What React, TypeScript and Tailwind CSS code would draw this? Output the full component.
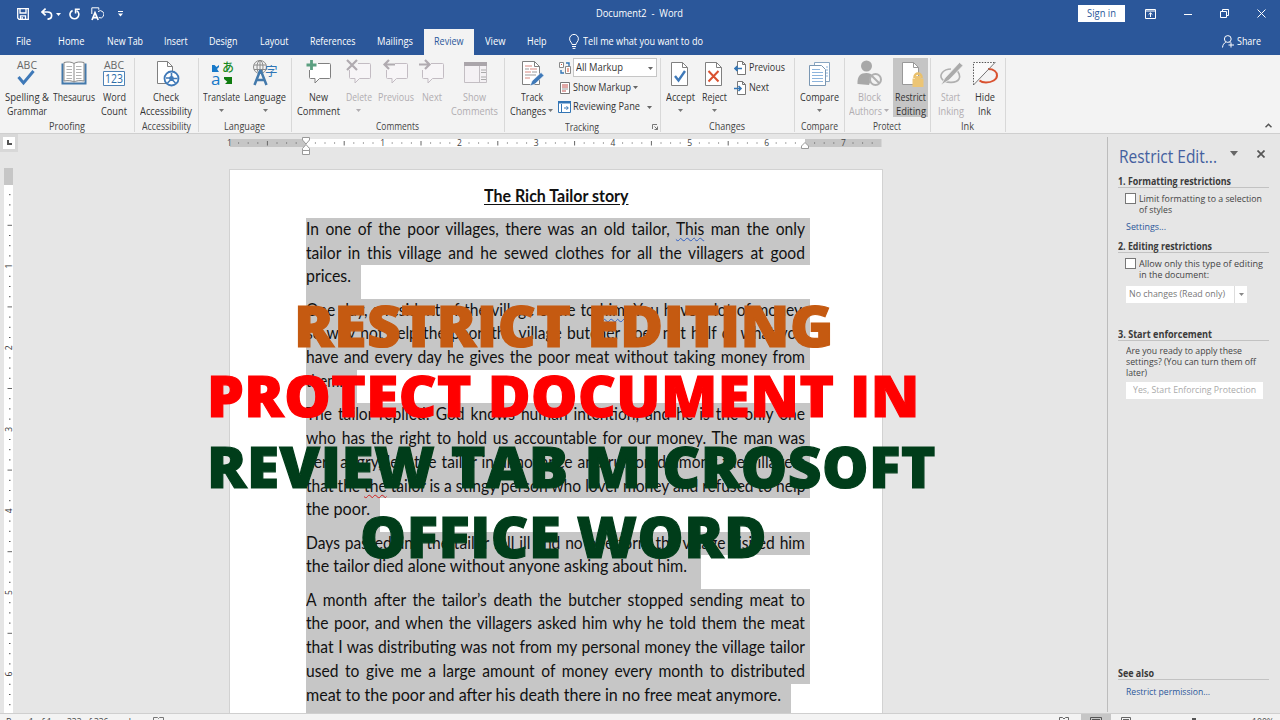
import React, { ReactNode, useLayoutEffect, useRef, useState } from "react";
import clsx from "clsx";

// Squeezes one line of text to a given width.
function Fit({
  w,
  className,
  children,
}: {
  w: number;
  className?: string;
  children: ReactNode;
}) {
  const ref = useRef<HTMLSpanElement>(null);
  const [scale, setScale] = useState(1);

  useLayoutEffect(() => {
    if (!ref.current) return;
    const natural = parseFloat(getComputedStyle(ref.current).width);
    if (natural > 0) setScale(w / natural);
  }, [w]);

  return (
    <span
      className={clsx("flex shrink-0 whitespace-nowrap", className)}
      style={{ width: w }}
    >
      <span
        ref={ref}
        className="block shrink-0 origin-left"
        style={{ transform: `scaleX(${scale})` }}
      >
        {children}
      </span>
    </span>
  );
}

function Caret({ className }: { className?: string }) {
  return (
    <svg
      viewBox="0 0 5 3"
      className={clsx("h-[3px] w-[5px] shrink-0 fill-current", className)}
    >
      <path d="M0 0h5L2.5 3z" />
    </svg>
  );
}

/* ---------- title bar ---------- */

function TitleBar() {
  return (
    <div className="flex h-[27px] items-center text-white">
      <div className="flex w-[596px] items-center pt-px pl-[17px]">
        <svg className="h-3 w-3" viewBox="0 0 12 12" fill="none" stroke="currentColor" strokeWidth="1.3">
          <path d="M.7.7h10.6v10.6H2L.7 10z" />
          <path d="M3 1v4h6V1M3.5 11V7.8h5V11M5.2 9v2" />
        </svg>
        <svg className="ml-3 h-3 w-3" viewBox="0 0 12 12" fill="none" stroke="currentColor" strokeWidth="1.7">
          <path d="M4.6.6 1 4l3.6 3.4M1.2 4h5.3c5.5 0 5.5 7 0 7.2" />
        </svg>
        <Caret className="ml-[3px]" />
        <svg className="ml-2 h-3 w-[11px]" viewBox="0 0 11 12" fill="none" stroke="currentColor" strokeWidth="1.6">
          <path d="M3.6 2.4a4.4 4.4 0 1 0 4 .2" />
          <path d="M10.8 1.2H6.6v4.2" />
        </svg>
        <svg className="ml-[11px] h-[14px] w-[13px]" viewBox="0 0 13 14" fill="none" stroke="currentColor">
          <path d="M.8 7V.8h7v2M7 4.6a3.6 3.6 0 1 1 .8 6" />
          <path d="M1 13 4 5.6 7.2 13M2.2 10.6H6" strokeWidth="1.7" />
        </svg>
        <svg className="ml-[14px] h-[6px] w-[5px]" viewBox="0 0 5 6" fill="currentColor">
          <path d="M0 0h5v1H0zM0 2.6h5L2.5 5.6z" />
        </svg>
      </div>
      <Fit w={87} className="text-[10.5px]">
        Document2&nbsp; -&nbsp; Word
      </Fit>
      <div className="ml-auto flex items-center">
        <div className="flex h-[17px] w-[47px] items-center justify-center bg-white text-[10.5px] text-[#2b579a]">
          <Fit w={29}>Sign in</Fit>
        </div>
        <svg className="ml-5 h-[10px] w-[11px]" viewBox="0 0 11 10" fill="none" stroke="currentColor">
          <path d="M.5.5h10v9H.5zM.5 2h10M5.5 8V4M3.6 5.6l1.9-1.8 1.9 1.8" />
        </svg>
        <svg className="ml-[28px] h-2 w-2" viewBox="0 0 8 8" stroke="currentColor">
          <path d="M0 4.500h8" />
        </svg>
        <svg className="ml-[28px] h-[9px] w-[9px]" viewBox="0 0 9 9" fill="none" stroke="currentColor">
          <path d="M.5 2.5h6v6h-6zM2.5 2.5v-2h6v6h-2" />
        </svg>
        <svg className="mr-[14px] ml-7 h-[9px] w-[9px]" viewBox="0 0 9 9" stroke="currentColor">
          <path d="m.5.5 8 8M8.5.5l-8 8" />
        </svg>
      </div>
    </div>
  );
}

/* ---------- tabs ---------- */

const TABS: { label: string; w: number }[] = [
  { label: "Home", w: 26.5 },
  { label: "New Tab", w: 36 },
  { label: "Insert", w: 23.5 },
  { label: "Design", w: 28.5 },
  { label: "Layout", w: 28.5 },
  { label: "References", w: 45.5 },
  { label: "Mailings", w: 36 },
  { label: "Review", w: 29.5 },
  { label: "View", w: 20.5 },
  { label: "Help", w: 19.5 },
];

function TabRow() {
  return (
    <div className="flex h-[27.500px] pl-4 text-[10.5px] text-white">
      <Fit w={15} className="mr-[16.500px] items-center pt-[2px]">
        File
      </Fit>
      {TABS.map((tab) => (
        <div
          key={tab.label}
          className={clsx(
            "flex items-center",
            tab.label === "Review"
              ? "mt-[2px] bg-[#f3f3f3] px-[10px] text-[#2b579a] ml-[0.500px] mr-[0.500px]"
              : "px-[10.850px] pt-[2px]",
          )}
        >
          <Fit w={tab.w}>{tab.label}</Fit>
        </div>
      ))}
      <svg className="mt-[7px] ml-[11px] h-[15px] w-[10px]" viewBox="0 0 10 15" fill="none" stroke="currentColor">
        <path d="M3 10.5c0-2-2.4-2.8-2.4-5.7a4.4 4.4 0 0 1 8.8 0c0 2.9-2.4 3.700-2.400 5.700zM3 12.500h4M3.600 14.400h2.800" />
      </svg>
      <Fit w={120} className="ml-[4.500px] items-center pt-[2px]">
        Tell me what you want to do
      </Fit>
      <div className="mr-[19px] ml-auto flex items-center pt-[2px]">
        <svg className="mr-[3px] h-[13px] w-[12px]" viewBox="0 0 12 13" fill="none" stroke="currentColor">
          <circle cx="5.800" cy="4" r="3.400" />
          <path d="M.5 12.500c.3-2.800 1.500-4.300 3.300-5.300M7.500 7l.8.800M9 7.500v5M6.500 10H12" />
        </svg>
        <Fit w={24}>Share</Fit>
      </div>
    </div>
  );
}

/* ---------- ribbon icons ---------- */

function BigIcon({ children }: { children: ReactNode }) {
  return (
    <svg className="h-7 w-7 shrink-0 overflow-visible" viewBox="0 0 28 28" fill="none">
      {children}
    </svg>
  );
}

const SpellingIcon = (
  <BigIcon>
    <text x="4" y="11" textLength="20" lengthAdjust="spacingAndGlyphs" fontSize="11" fill="#666">
      ABC
    </text>
    <path d="m5.500 19 5 6L20.500 13" stroke="#3f79b8" strokeWidth="3" />
  </BigIcon>
);

const ThesaurusIcon = (
  <BigIcon>
    <path d="M2.500 5.500v20h23v-20" stroke="#4379ab" strokeWidth="2" />
    <path d="M4 4.500c4-1 8-.5 10 1 2-1.500 6-2 10-1V23c-4-.8-8-.3-10 1-2-1.300-6-1.800-10-1z" fill="#fff" stroke="#888" />
    <path d="M14 5.500V24" stroke="#888" />
    <path d="M6.500 8.500H12M6.500 11.500H12M6.500 14.500H12M6.500 17.500H12M6.500 20.500H12M16 8.500h5.500M16 11.500h5.500M16 14.500h5.500M16 17.500h5.500M16 20.500h5.500" stroke="#aaa" strokeWidth=".9" />
  </BigIcon>
);

const WordCountIcon = (
  <BigIcon>
    <text x="4" y="11" textLength="20" lengthAdjust="spacingAndGlyphs" fontSize="11" fill="#666">
      ABC
    </text>
    <path d="M3.500 13.500h21v14h-21z" fill="#fff" stroke="#4f82b5" />
    <text x="5" y="25" textLength="18" lengthAdjust="spacingAndGlyphs" fontSize="12" fill="#2e6da8">
      123
    </text>
  </BigIcon>
);

const AccessibilityIcon = (
  <BigIcon>
    <path d="M5.500 3.500h10l5 5v17h-15z" fill="#fff" stroke="#808080" />
    <path d="M15.500 3.500v5h5" stroke="#808080" />
    <circle cx="19.500" cy="20.500" r="7" fill="#fff" stroke="#3f79b8" strokeWidth="1.800" />
    <path d="M19.500 15v5.500h6M19.500 21l-4 4M19.500 21l4 4M14 20h5" stroke="#3f79b8" strokeWidth="1.600" />
    <circle cx="19.500" cy="20.500" r="2.400" fill="#3f79b8" />
  </BigIcon>
);

const TranslateIcon = (
  <BigIcon>
    <text x="14" y="14" fontSize="12" fontWeight="500" fill="#178a1d" fontFamily="Noto Sans CJK JP, sans-serif">
      あ
    </text>
    <text x="3" y="27" fontSize="17" fill="#1879c9">
      a
    </text>
    <path d="M4 14V7h2.500l2 2L11 7v2l-2 2 2 3z" fill="#1879c9" />
    <path d="M24 19v7h-7l2.300-2.300L16 21v-2z" fill="#107c10" />
  </BigIcon>
);

const LanguageIcon = (
  <BigIcon>
    <g stroke="#8a8a8a">
      <circle cx="9" cy="9" r="6.500" />
      <ellipse cx="9" cy="9" rx="3" ry="6.500" />
      <path d="M3 7h12M3 11.500h12M9 2.500V14" />
    </g>
    <text x="14" y="18" fontSize="12.500" fill="#2e75b6" fontFamily="Noto Sans CJK JP, sans-serif">
      字
    </text>
    <path d="m3.500 27 5.500-14h1l5.500 14M6 22h7.500" stroke="#4379ab" strokeWidth="2.500" />
  </BigIcon>
);

function CommentIcon({ kind }: { kind: "new" | "delete" | "prev" | "next" }) {
  const off = kind !== "new";
  return (
    <BigIcon>
      <path
        d="M13 5.500h11.500q1 0 1 1v13q0 1-1 1H14.500l-4.500 4.500v-4.500H5.500q-1 0-1-1V12"
        fill={off ? "#f7f5f7" : "#fff"}
        stroke={off ? "#c3bcc3" : "#808080"}
      />
      {kind === "new" && <path d="M6.500 2v10M1.500 7h10" stroke="#5b9f80" strokeWidth="2.800" />}
      {kind === "delete" && <path d="m2 2 10 10M12 2 2 12" stroke="#b0abb0" strokeWidth="2.200" />}
      {kind === "prev" && <path d="M7 2 2.500 6.500 7 11M3 6.500h10" stroke="#b0abb0" strokeWidth="2.200" />}
      {kind === "next" && <path d="m7 2 4.500 4.500L7 11M11 6.500H1" stroke="#b0abb0" strokeWidth="2.200" />}
    </BigIcon>
  );
}

const ShowCommentsIcon = (
  <BigIcon>
    <path d="M3.500 4.500h22v20h-22z" fill="#f4f1f4" stroke="#c3bec3" />
    <path d="M3 4h23v4H3z" fill="#aaa5aa" />
    <path d="M18.500 8v16" stroke="#c3bec3" />
    <path d="M20 12h5M20 14.500h5M20 19h5M20 21.500h5" stroke="#aaa" />
  </BigIcon>
);

const TrackIcon = (
  <BigIcon>
    <path d="M4.500 3.500h12l5 5v18h-17z" fill="#fff" stroke="#808080" />
    <path d="M16.500 3.500v5h5" stroke="#808080" />
    <path d="M7 8h7M7 14h6M12 11h7M7 20h5" stroke="#d98880" />
    <path d="M7 11h4M14 14h5M7 17h11" stroke="#999" />
    <path d="m12 28 2-5L23 14.500l3 3L17 26z" fill="#3f79b8" stroke="#fff" strokeWidth=".6" />
  </BigIcon>
);

function PageIcon({ mark }: { mark: "check" | "cross" }) {
  return (
    <BigIcon>
      <path d="M5.500 4.500h11l5 5v18h-16z" fill="#fff" stroke="#808080" />
      <path d="M16.500 4.500v5h5" stroke="#808080" />
      {mark === "check" ? (
        <path d="m9 18 3.500 4.500L19 13" stroke="#3f79b8" strokeWidth="2.400" />
      ) : (
        <path d="m8.500 13 10 10.500M18.500 13l-10 10.500" stroke="#d9512f" strokeWidth="2" />
      )}
    </BigIcon>
  );
}

const CompareIcon = (
  <BigIcon>
    <path d="M9.500 4.500h15v19h-15z" fill="#fff" stroke="#8aa6c1" />
    <path d="M21 9h2M21 12h2M21 15h2M21 18h2" stroke="#8db4dc" />
    <path d="M4.500 7.500h12l4 4v16h-16z" fill="#fff" stroke="#7a97b3" />
    <path d="M7 11.500h8M7 14.500h11M7 17.500h11M7 20.500h11M7 23.500h11" stroke="#8db4dc" strokeWidth="1.200" />
  </BigIcon>
);

const BlockIcon = (
  <BigIcon>
    <circle cx="11.500" cy="8" r="5.500" fill="#a8a8a8" />
    <path d="M2.500 26c-.5-8 3-11 9-11 3 0 5 1 6 2.500L14 27z" fill="#a8a8a8" />
    <circle cx="20.500" cy="21.500" r="5.500" fill="#f3f3f3" stroke="#b0b0b0" strokeWidth="2" />
    <path d="m16.700 17.700 7.600 7.600" stroke="#b0b0b0" strokeWidth="2" />
  </BigIcon>
);

const RestrictIcon = (
  <BigIcon>
    <path d="M5.500 4.500h11l5 5v17h-16z" fill="#fff" stroke="#999" />
    <path d="M16.500 4.500v5h5" stroke="#999" />
    <path d="M17.500 20v-1a3.500 3.500 0 0 1 7 0v1" stroke="#e9c06c" strokeWidth="2.500" />
    <path d="M15.500 20.500h11V29h-11z" fill="#ecc575" />
    <path d="M18 18h6v3h-6z" fill="#ecc575" />
  </BigIcon>
);

const StartInkIcon = (
  <BigIcon>
    <path d="M14 11C6 11 2 17 5 21s14 5 17 0c1.500-3 0-7-3-9" stroke="#b0b0b0" strokeWidth="1.600" />
    <path d="m4 27 4-7L22.500 4.500l3.500 3L12 22z" fill="#aaa" stroke="#f3f3f3" strokeWidth=".7" />
  </BigIcon>
);

const HideInkIcon = (
  <BigIcon>
    <path d="M2 4h22L2 26z" fill="#fafafa" />
    <path d="M2.500 27V4.500h21" stroke="#555" strokeDasharray="1.500 1.300" />
    <path d="M17 11c6 0 9 3 9 6.500 0 4-5 7-11 7-3 0-5-.7-6.500-2" stroke="#d9512f" strokeWidth="2" />
    <path d="M2.500 27 24.500 4" stroke="#777" />
  </BigIcon>
);

/* ---------- ribbon ---------- */

function RibbonButton({
  width,
  icon,
  line1,
  w1,
  line2,
  w2,
  caret,
  disabled,
  active,
}: {
  width: string;
  icon: ReactNode;
  line1: string;
  w1: number;
  line2?: string;
  w2?: number;
  caret?: boolean;
  disabled?: boolean;
  active?: boolean;
}) {
  return (
    <div
      className={clsx(
        "flex h-[59px] shrink-0 flex-col items-center",
        width,
        disabled ? "text-[#b1adb1]" : "text-[#333]",
        active && "bg-[#c5c5c5]",
      )}
    >
      {icon}
      <Fit w={w1} className="mt-1 h-[14px] leading-[14px]">
        {line1}
      </Fit>
      <div className="flex h-[14px] items-center leading-[14px]">
        {line2 && <Fit w={w2 ?? 30}>{line2}</Fit>}
        {caret && <Caret className={clsx(!disabled && "text-[#777]", line2 && "ml-[2px]")} />}
      </div>
    </div>
  );
}

function Group({
  width,
  label,
  w,
  children,
}: {
  width: string;
  label: string;
  w: number;
  children: ReactNode;
}) {
  return (
    <div className={clsx("flex h-[74px] shrink-0 flex-col border-r border-[#d8d8d8]", width)}>
      <div className="flex h-[63px]">{children}</div>
      <div className="flex h-3 justify-center pr-px leading-3 text-[#444]">
        <Fit w={w}>{label}</Fit>
      </div>
    </div>
  );
}

function SmallPage({ dir }: { dir: "left" | "right" }) {
  return (
    <svg className="h-[14px] w-3" viewBox="0 0 12 14" fill="none">
      <path d="M3.500.5h5l3 3v10h-8zM8.500.5v3h3" fill="#fff" stroke="#777" />
      <path
        d={dir === "left" ? "M8 7.500H1M3.500 5 1 7.500 3.500 10" : "M0 7.500h7M4.500 5 7 7.500 4.500 10"}
        stroke="#3375b5"
        strokeWidth="1.600"
      />
    </svg>
  );
}

function Ribbon() {
  return (
    <div className="flex h-[79px] shrink-0 border-b border-[#cfcfcf] bg-[#f3f3f3] pt-[3px] text-[10.2px] text-[#333]">
      <Group width="w-[135px]" label="Proofing" w={36}>
        <div className="w-1" />
        <RibbonButton width="w-[45px]" icon={SpellingIcon} line1="Spelling &" w1={44} line2="Grammar" w2={40} />
        <RibbonButton width="w-[50px]" icon={ThesaurusIcon} line1="Thesaurus" w1={42} />
        <RibbonButton width="w-[30px]" icon={WordCountIcon} line1="Word" w1={23} line2="Count" w2={26} />
      </Group>
      <Group width="w-[64px]" label="Accessibility" w={49}>
        <RibbonButton width="w-[62px]" icon={AccessibilityIcon} line1="Check" w1={26} line2="Accessibility" w2={52} />
      </Group>
      <Group width="w-[93px]" label="Language" w={41}>
        <RibbonButton width="w-[45px]" icon={TranslateIcon} line1="Translate" w1={37} caret />
        <RibbonButton width="w-[42px]" icon={LanguageIcon} line1="Language" w1={42} caret />
      </Group>
      <Group width="w-[213px]" label="Comments" w={43}>
        <RibbonButton width="w-[53px]" icon={<CommentIcon kind="new" />} line1="New" w1={19} line2="Comment" w2={43} />
        <RibbonButton width="w-[27px]" icon={<CommentIcon kind="delete" />} line1="Delete" w1={26} caret disabled />
        <RibbonButton width="w-[47px]" icon={<CommentIcon kind="prev" />} line1="Previous" w1={36} disabled />
        <RibbonButton width="w-[26px]" icon={<CommentIcon kind="next" />} line1="Next" w1={20} disabled />
        <RibbonButton width="w-[59px]" icon={ShowCommentsIcon} line1="Show" w1={23} line2="Comments" w2={47} disabled />
      </Group>
      <Group width="w-[156px]" label="Tracking" w={34}>
        <RibbonButton width="w-[53px]" icon={TrackIcon} line1="Track" w1={22} line2="Changes" w2={36} caret />
        <div className="flex w-[99px] flex-col">
          <div className="flex h-[20px] items-center">
            <svg className="h-[14px] w-[14px]" viewBox="0 0 14 14" fill="none">
              <path d="M1.500 1.500h4v5h-4zM7.500 5.500h5v7h-5z" fill="#fff" stroke="#888" />
              <path d="M8 2h3v3M6 12H3V9" stroke="#3375b5" strokeWidth="1.400" />
              <path d="M9 8h2M9 10h2M3 3.500h1" stroke="#d9512f" />
            </svg>
            <div className="ml-px flex h-[19px] w-[84px] items-center justify-between border border-[#c6c6c6] bg-white pt-px pr-[3px] pl-[2px]">
              <Fit w={47}>All Markup</Fit>
              <Caret className="text-[#666]" />
            </div>
          </div>
          <div className="flex h-[20px] items-center">
            <svg className="ml-[2px] h-3 w-[10px]" viewBox="0 0 10 12" fill="none">
              <path d="M.5.500h9v11h-9z" fill="#fff" stroke="#777" />
              <path d="M2 3h6M2 5h6M2 9h4" stroke="#c0504d" />
              <path d="M2 7h6" stroke="#999" />
            </svg>
            <Fit w={58} className="ml-[3px]">
              Show Markup
            </Fit>
            <Caret className="ml-[2px] text-[#666]" />
          </div>
          <div className="flex h-[19px] items-center">
            <svg className="h-[12px] w-[13px]" viewBox="0 0 13 12" fill="none">
              <path d="M.5.500h12v11H.5z" fill="#fff" stroke="#3375b5" />
              <path d="M0 0h13v2.500H0z" fill="#3375b5" />
              <path d="M3.500 3v9" stroke="#3375b5" />
              <path d="M6 7h4M8.500 5.200 10.300 7 8.500 8.800" stroke="#3375b5" />
            </svg>
            <Fit w={67} className="ml-[2px]">
              Reviewing Pane
            </Fit>
            <Caret className="ml-[7px] text-[#666]" />
          </div>
        </div>
        <svg className="mt-[66px] -ml-[5px] h-[6px] w-[6px] shrink-0" viewBox="0 0 6 6" fill="none" stroke="#777">
          <path d="M.5 5V.5H5M2.500 2.500l3 3M5.500 2.500v3h-3" />
        </svg>
      </Group>
      <Group width="w-[134px]" label="Changes" w={36}>
        <RibbonButton width="w-[38px]" icon={<PageIcon mark="check" />} line1="Accept" w1={29} caret />
        <RibbonButton width="w-[30px]" icon={<PageIcon mark="cross" />} line1="Reject" w1={25} caret />
        <div className="ml-[5px] flex flex-col">
          <div className="flex h-5 items-center gap-[3px]">
            <SmallPage dir="left" />
            <Fit w={36}>Previous</Fit>
          </div>
          <div className="flex h-[20px] items-center gap-[3px]">
            <SmallPage dir="right" />
            <Fit w={20}>Next</Fit>
          </div>
        </div>
      </Group>
      <Group width="w-[50px]" label="Compare" w={37}>
        <RibbonButton width="w-[48px]" icon={CompareIcon} line1="Compare" w1={39} caret />
      </Group>
      <Group width="w-[86px]" label="Protect" w={28}>
        <RibbonButton width="w-[48px]" icon={BlockIcon} line1="Block" w1={23} line2="Authors" w2={33} caret disabled />
        <RibbonButton width="w-[35px]" icon={RestrictIcon} line1="Restrict" w1={31} line2="Editing" w2={30} active />
      </Group>
      <Group width="w-[75px]" label="Ink" w={13}>
        <RibbonButton width="w-[39px]" icon={StartInkIcon} line1="Start" w1={19} line2="Inking" w2={26} disabled />
        <RibbonButton width="w-[29px]" icon={HideInkIcon} line1="Hide" w1={20} line2="Ink" w2={13} />
      </Group>
      <svg className="mt-auto mr-[8px] mb-[5px] ml-auto h-[5px] w-[7px]" viewBox="0 0 7 5" fill="none" stroke="#555" strokeWidth="1.500">
        <path d="M.5 4.300 3.500 1.300l3 3" />
      </svg>
    </div>
  );
}

/* ---------- rulers ---------- */

const range = (from: number, to: number) =>
  Array.from({ length: to - from + 1 }, (_, i) => from + i);

function HorizontalRuler() {
  return (
    <svg className="mt-[4px] h-5 w-[660px] overflow-visible" viewBox="0 0 660 20">
      <path d="M2 1h651.500v8H2z" fill="#c6c6c6" />
      <path d="M78 1h499v8H78z" fill="#fff" />
      {range(-8, 59).map((i) => {
        const x = 77.800 + i * 9.600;
        if (i === 0 || i === 52) return null;
        if (i % 8 === 0)
          return (
            <text key={i} x={i < 0 ? 1.500 : x} y={8} textAnchor="middle" fontSize="8.500" fill="#444">
              {Math.abs(i / 8)}
            </text>
          );
        return i % 4 === 0 ? (
          <path key={i} d={`M${x} 3v4.500`} stroke="#666" />
        ) : (
          <path key={i} d={`M${x - 0.500} 5h1`} stroke="#555" />
        );
      })}
      <g fill="#fff" stroke="#999">
        <path d="M74.500-.5h7v2.500L78 6l-3.500-4zM74.500 12.500v-2L78 6.500l3.500 4v2zM74.500 12.500h7v4h-7z" />
        <path d="M573.500 10.500v-2.500l3.500-3.500 3.500 3.500v2.500z" />
      </g>
    </svg>
  );
}

function VerticalRuler() {
  return (
    <svg className="mt-[16.500px] ml-1 h-[545px] w-[9px]" viewBox="0 0 9 545">
      <path d="M0 0h9v17H0z" fill="#c6c6c6" />
      <path d="M0 17h9v528H0z" fill="#fff" />
      {range(1, 51).map((i) => {
        const y = 16.500 + i * 10.200;
        if (i % 8 === 0)
          return (
            <text key={i} textAnchor="middle" fontSize="8.500" fill="#333" transform={`translate(8 ${y}) rotate(-90)`}>
              {i / 8}
            </text>
          );
        return i % 4 === 0 ? (
          <path key={i} d={`M3.500 ${y}h4.500`} stroke="#666" />
        ) : (
          <path key={i} d={`M5 ${y}h1.500`} stroke="#555" />
        );
      })}
    </svg>
  );
}

/* ---------- document ---------- */

type Paragraph = { lines: ReactNode[]; last: string; w: number; pad?: string };

const blueWave =
  "underline decoration-[#2f5fc4] decoration-wavy decoration-[0.800px] underline-offset-[2px]";
const redWave =
  "underline decoration-[#d02020] decoration-wavy decoration-[0.800px] underline-offset-[2px]";

const STORY: Paragraph[] = [
  {
    lines: [
      <>
        In one of the poor villages, there was an old tailor,{" "}
        <span className={blueWave}>This</span> man the only
      </>,
      "tailor in this village and he sewed clothes for all the villagers at good",
    ],
    last: "prices.",
    w: 45,
  },
  {
    lines: [
      <>
        One day, a resident of the village came to{" "}
        <span className={blueWave}>him:</span> You have a lot of money,
      </>,
      "so why not help the poor, the village butcher does not half of what you",
      "have and every day he gives the poor meat without taking money from",
    ],
    last: "them.",
    w: 37,
    pad: "pr-[14px]",
  },
  {
    lines: [
      "The tailor replied: God knows human intention, and he is the only one",
      "who has the right to hold us accountable for our money. The man was",
      "very angry, left the tailor in annoyance and rumored among the villagers",
      <>
        that the <span className={redWave}>the</span> tailor is a stingy person
        who lover money and refused to help
      </>,
    ],
    last: "the poor.",
    w: 64,
  },
  {
    lines: [
      "Days passed and the tailor fell ill and no one form the village visited him",
    ],
    last: "the tailor died alone without anyone asking about him.",
    w: 381,
    pad: "pr-[14px]",
  },
  {
    lines: [
      "A month after the tailor’s death the butcher stopped sending meat to",
      "the poor, and when the villagers asked him why he told them the meat",
      "that I was distributing was not from my personal money the village tailor",
      "used to give me a large amount of money every month to distributed",
    ],
    last: "meat to the poor and after his death there in no free meat anymore.",
    w: 475,
  },
];

function Story() {
  return (
    <div className="text-[16.800px] leading-[21px] text-[#111]">
      {STORY.map((p) => (
        <div key={p.last}>
          {p.lines.map((line, i) => (
            <div key={i} className="h-[23.800px] w-[503.500px] bg-[#c6c6c6]">
              <div className="w-[536.500px] origin-left scale-x-[0.930] whitespace-nowrap [text-align-last:justify]">
                {line}
              </div>
            </div>
          ))}
          <div className="flex h-[33.200px]">
            <div className={clsx("bg-[#c6c6c6]", p.pad ?? "pr-[10px]")}>
              <Fit w={p.w}>{p.last}</Fit>
            </div>
          </div>
        </div>
      ))}
    </div>
  );
}

function Page() {
  return (
    <div className="ml-[1px] h-[546px] w-[654px] overflow-hidden border border-b-0 border-[#d2d2d2] bg-white pl-[76px] font-['Lato','Liberation_Sans',sans-serif]">
      <div className="flex h-[48.300px] w-[500px] justify-center pt-[14px] text-[16.500px] leading-[24px] font-bold text-[#111]">
        <Fit w={144.5} className="underline underline-offset-[2px]">
          The Rich Tailor story
        </Fit>
      </div>
      <Story />
    </div>
  );
}

/* ---------- restrict editing pane ---------- */

function Heading({ w, children }: { w: number; children: ReactNode }) {
  return (
    <div className="h-3 w-[151px] shrink-0 border-b border-[#c2c2c2] text-[10px] leading-[11px] font-bold text-[#3a3a3a]">
      <Fit w={w}>{children}</Fit>
    </div>
  );
}

function CheckRow({ lines }: { lines: [string, number][] }) {
  return (
    <div className="mt-[5px] ml-[7px] flex h-[23px] shrink-0 gap-[3px]">
      <div className="h-[11px] w-[11px] border border-[#777] bg-white" />
      <div className="leading-[11.200px]">
        {lines.map(([text, w]) => (
          <Fit key={text} w={w}>
            {text}
          </Fit>
        ))}
      </div>
    </div>
  );
}

function RestrictPane() {
  return (
    <aside className="mt-[3px] flex h-[575px] w-[173px] flex-col border-l border-[#bcbcbc] pl-[10px] text-[9.300px] text-[#444]">
      <div className="flex h-[39px] shrink-0 items-center pt-[1px] text-[#44609f]">
        <Fit w={98} className="ml-px text-[18px]">
          Restrict Edit...
        </Fit>
        <svg className="mb-[6px] ml-[13px] h-[5px] w-2 fill-[#666]" viewBox="0 0 8 5">
          <path d="M0 0h8L4 5z" />
        </svg>
        <svg className="mb-[6px] ml-[19px] h-2 w-2" viewBox="0 0 8 8" stroke="#555" strokeWidth="1.700">
          <path d="m.5.5 7 7M7.500.5l-7 7" />
        </svg>
      </div>
      <Heading w={113}>1. Formatting restrictions</Heading>
      <CheckRow
        lines={[
          ["Limit formatting to a selection", 123],
          ["of styles", 33],
        ]}
      />
      <Fit w={40} className="mt-[5px] mb-[6px] ml-2 h-[14px] leading-[11px] text-[#2b579a]">
        Settings...
      </Fit>
      <Heading w={94}>2. Editing restrictions</Heading>
      <CheckRow
        lines={[
          ["Allow only this type of editing", 124],
          ["in the document:", 70],
        ]}
      />
      <div className="mt-[5px] ml-2 flex h-[17px] w-[121px] shrink-0 items-center bg-white text-[#777]">
        <Fit w={96} className="ml-[3px]">
          No changes (Read only)
        </Fit>
        <div className="ml-auto flex h-full w-[13px] items-center justify-center border-l border-[#ddd]">
          <Caret className="text-[#888]" />
        </div>
      </div>
      <div className="h-[26px] shrink-0" />
      <Heading w={94}>3. Start enforcement</Heading>
      <div className="mt-[4px] ml-2 leading-[11.100px]">
        <Fit w={116}>Are you ready to apply these</Fit>
        <Fit w={130}>settings? (You can turn them off</Fit>
        <Fit w={21}>later)</Fit>
      </div>
      <div className="mt-[4px] ml-2 flex h-[17px] w-[137px] shrink-0 items-center justify-center bg-white text-[#aaa]">
        <Fit w={123}>Yes, Start Enforcing Protection</Fit>
      </div>
      <div className="mt-auto">
        <Heading w={36}>See also</Heading>
        <Fit w={84} className="mt-[6px] mb-[14px] ml-2 leading-3 text-[#2b579a]">
          Restrict permission...
        </Fit>
      </div>
    </aside>
  );
}

/* ---------- status bar ---------- */

function StatusBar() {
  return (
    <div className="flex h-[7px] items-start overflow-hidden border-t border-[#cfcfcf] bg-[#f3f3f3] text-[9.500px] leading-3 text-[#444]">
      <Fit w={46} className="mt-[2px] ml-[6px]">
        Page 1 of 1
      </Fit>
      <Fit w={68} className="mt-[2px] ml-[15px]">
        333 of 336 words
      </Fit>
      <svg className="mt-[3px] ml-[18px] h-[10px] w-[11px]" viewBox="0 0 11 10" fill="none" stroke="#777">
        <path d="M.5 10V.5h4l1 1 1-1h4V10" />
      </svg>
      <div className="ml-auto flex items-start">
        <svg className="mt-[3px] mr-3 h-2 w-[10px]" viewBox="0 0 10 8" fill="none" stroke="#666">
          <path d="M.5 8V.5h3L5 2 6.500.5h3V8M3 3l4 4M7 3 3 7" />
        </svg>
        <div className="flex h-[7px] w-[30px] justify-center bg-[#c6c6c6] pt-[3px]">
          <svg className="h-2 w-3" viewBox="0 0 12 8" fill="none" stroke="#555">
            <path d="M.5 8V.5h11V8M2 2.500h8" />
          </svg>
        </div>
        <svg className="mt-[3px] ml-[10px] h-2 w-[10px]" viewBox="0 0 10 8" fill="none" stroke="#666">
          <path d="M.5 8V.5h9V8M2 2.500h6" />
        </svg>
        <div className="mt-[4px] ml-[61px] h-2 w-[4px] bg-[#555]" />
        <Fit w={22} className="mt-[2px] mr-[6px] ml-[56px]">
          100%
        </Fit>
      </div>
    </div>
  );
}

/* ---------- headline over the window ---------- */

function Headline() {
  return (
    <div className="absolute top-[290px] left-[208px] text-[56px] leading-[70.400px] font-extrabold tracking-[0.500px] [-webkit-text-stroke:1.200px_currentColor]">
      <Fit w={540} className="ml-[86px] text-[#c55a11]">
        RESTRICT EDITING
      </Fit>
      <Fit w={713} className="-ml-px text-[#ff0000]">
        PROTECT DOCUMENT IN
      </Fit>
      <Fit w={729} className="-ml-px text-[#003d1a]">
        REVIEW TAB MICROSOFT
      </Fit>
      <Fit w={407} className="ml-[152px] text-[#003d1a]">
        OFFICE WORD
      </Fit>
    </div>
  );
}

export default function App() {
  return (
    <div className="relative flex h-[720px] w-[1280px] flex-col overflow-hidden bg-[#e6e6e6] font-['Open_Sans','Noto_Sans',sans-serif]">
      <header className="h-[54.500px] shrink-0 bg-[#2b579a]">
        <TitleBar />
        <TabRow />
      </header>
      <Ribbon />
      <div className="flex h-[579.500px] shrink-0">
        <div className="w-[228px]">
          <div className="h-[18px] w-[18px] bg-[#d8d8d8] p-[3px]">
            <div className="flex h-3 w-3 items-center justify-center bg-white">
              <div className="h-[5px] w-[5px] border-b-2 border-l-2 border-[#555]" />
            </div>
          </div>
          <VerticalRuler />
        </div>
        <main className="w-[879px]">
          <HorizontalRuler />
          <div className="mt-[11px]">
            <Page />
          </div>
        </main>
        <RestrictPane />
      </div>
      <StatusBar />
      <Headline />
    </div>
  );
}
